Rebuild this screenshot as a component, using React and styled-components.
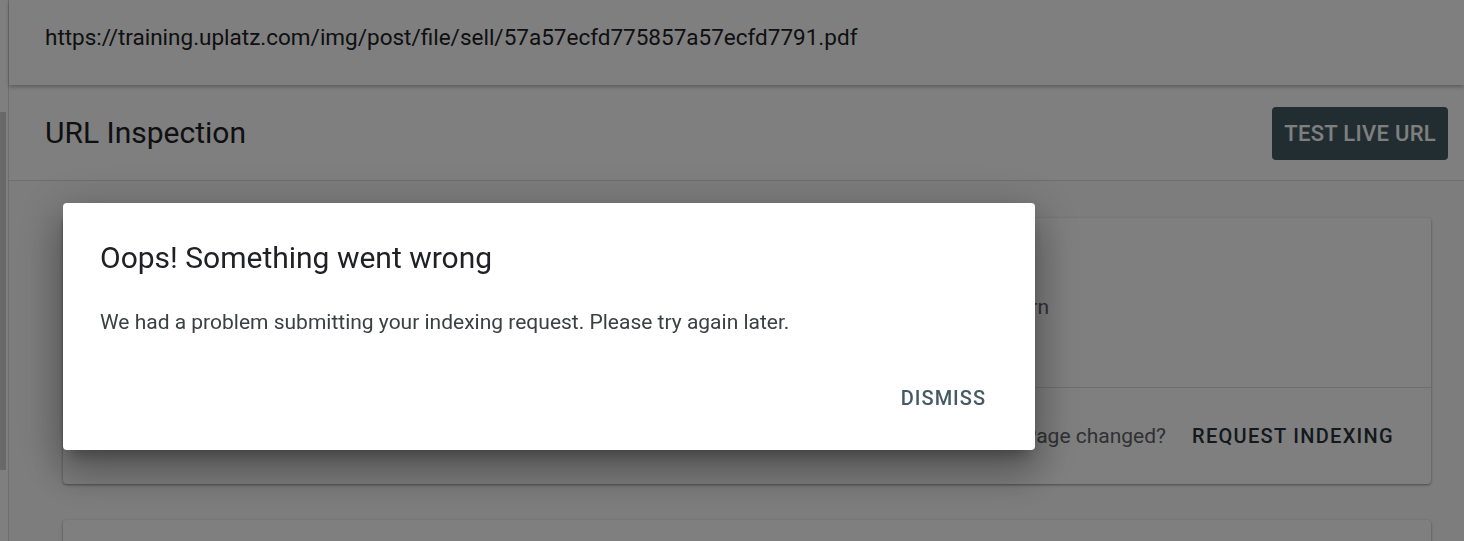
import React from 'react';
import styled, { createGlobalStyle } from 'styled-components';

const GlobalStyle = createGlobalStyle`
	html, body {
		margin: 0;
		padding: 0;
		height: 100%;
		overflow: hidden;
	}
	body {
		font-family: Roboto, "Liberation Sans", Arial, sans-serif;
		background: #fafafa;
		color: #202124;
	}
`;

const App = () => (
	<>
		<GlobalStyle />
		<Page>
			<Sidebar>
				<SideThumb />
			</Sidebar>
			<Main>
				<TopBar>https://training.uplatz.com/img/post/file/sell/57a57ecfd775857a57ecfd7791.pdf</TopBar>
				<Header>
					<Title>URL Inspection</Title>
					<TestButton>TEST LIVE URL</TestButton>
				</Header>
				<Content>
					<Card>
						<CardBody>
							<Muted>URL pattern</Muted>
						</CardBody>
						<CardFooter>
							<Muted>Page changed?</Muted>
							<TextButton>REQUEST INDEXING</TextButton>
						</CardFooter>
					</Card>
					<Card />
				</Content>
			</Main>
		</Page>
		<Scrim />
		<Dialog role="dialog">
			<DialogTitle>Oops! Something went wrong</DialogTitle>
			<DialogText>We had a problem submitting your indexing request. Please try again later.</DialogText>
			<DialogActions>
				<DismissButton>DISMISS</DismissButton>
			</DialogActions>
		</Dialog>
	</>
);

export default App;

const Page = styled.div`
	display: flex;
	height: 100vh;
	overflow: hidden;
	background: #fafafa;
`;

const Sidebar = styled.aside`
	width: 8px;
	flex-shrink: 0;
	border-right: 1px solid #dadce0;
	background: #fff;
	padding-top: 112px;
`;

const SideThumb = styled.div`
	width: 6px;
	height: 358px;
	background: #d2d2d2;
`;

const Main = styled.main`
	flex: 1;
	display: flex;
	flex-direction: column;
	min-width: 0;
`;

const TopBar = styled.div`
	flex-shrink: 0;
	height: 85px;
	box-sizing: border-box;
	padding: 22px 36px 0;
	background: #fff;
	font-size: 22.5px;
	line-height: 30px;
	color: #202124;
	box-shadow: 0 2px 4px rgba(0, 0, 0, 0.28);
	position: relative;
	z-index: 1;
`;

const Header = styled.div`
	flex-shrink: 0;
	height: 96px;
	box-sizing: border-box;
	display: flex;
	align-items: center;
	justify-content: space-between;
	padding: 0 16px 0 36px;
	background: #fff;
	border-bottom: 1px solid #dadce0;
`;

const Title = styled.h1`
	margin: 0;
	font-size: 30px;
	font-weight: 400;
	color: #202124;
`;

const TestButton = styled.button`
	height: 53px;
	margin-top: 2px;
	padding: 0 12px;
	border: none;
	border-radius: 4px;
	background: #455a64;
	color: #fff;
	font-family: inherit;
	font-size: 22px;
	font-weight: 500;
	letter-spacing: 0.3px;
`;

const Content = styled.div`
	display: flex;
	flex-direction: column;
	gap: 36px;
	padding: 37px 33px 0 54px;
`;

const Card = styled.section`
	flex-shrink: 0;
	background: #fff;
	border-radius: 4px;
	box-shadow: 0 1px 3px rgba(0, 0, 0, 0.3), 0 1px 2px rgba(0, 0, 0, 0.15);
	min-height: 160px;
`;

const CardBody = styled.div`
	height: 170px;
	box-sizing: border-box;
	padding: 75px 382px 0 0;
	text-align: right;
	border-bottom: 1px solid #dadce0;
`;

const CardFooter = styled.div`
	height: 96px;
	display: flex;
	align-items: center;
	justify-content: flex-end;
	gap: 26px;
	padding-right: 37px;
`;

const Muted = styled.span`
	font-size: 21px;
	line-height: 28px;
	color: #5f6368;
`;

const TextButton = styled.button`
	padding: 0;
	border: none;
	background: none;
	font-family: inherit;
	font-size: 20px;
	font-weight: 500;
	letter-spacing: 1.3px;
	color: #263238;
`;

const Scrim = styled.div`
	position: fixed;
	inset: 0;
	z-index: 10;
	background: rgba(0, 0, 0, 0.5);
`;

const Dialog = styled.div`
	position: fixed;
	z-index: 11;
	left: 63px;
	top: 203px;
	width: 972px;
	height: 247px;
	box-sizing: border-box;
	padding: 35px 37px 0;
	background: #fff;
	border-radius: 4px;
	box-shadow: 0 11px 15px -7px rgba(0, 0, 0, 0.3), 0 24px 38px 3px rgba(0, 0, 0, 0.2), 0 9px 46px 8px rgba(0, 0, 0, 0.18);
	display: flex;
	flex-direction: column;
`;

const DialogTitle = styled.h2`
	margin: 0;
	font-size: 30px;
	line-height: 40px;
	font-weight: 400;
	color: #202124;
`;

const DialogText = styled.p`
	margin: 30px 0 0;
	font-size: 21px;
	line-height: 28px;
	color: #3c4043;
`;

const DialogActions = styled.div`
	display: flex;
	justify-content: flex-end;
	margin-top: 38px;
`;

const DismissButton = styled.button`
	height: 48px;
	padding: 0 12px;
	border: none;
	background: none;
	font-family: inherit;
	font-size: 20px;
	font-weight: 500;
	letter-spacing: 1px;
	color: #455a64;
`;
